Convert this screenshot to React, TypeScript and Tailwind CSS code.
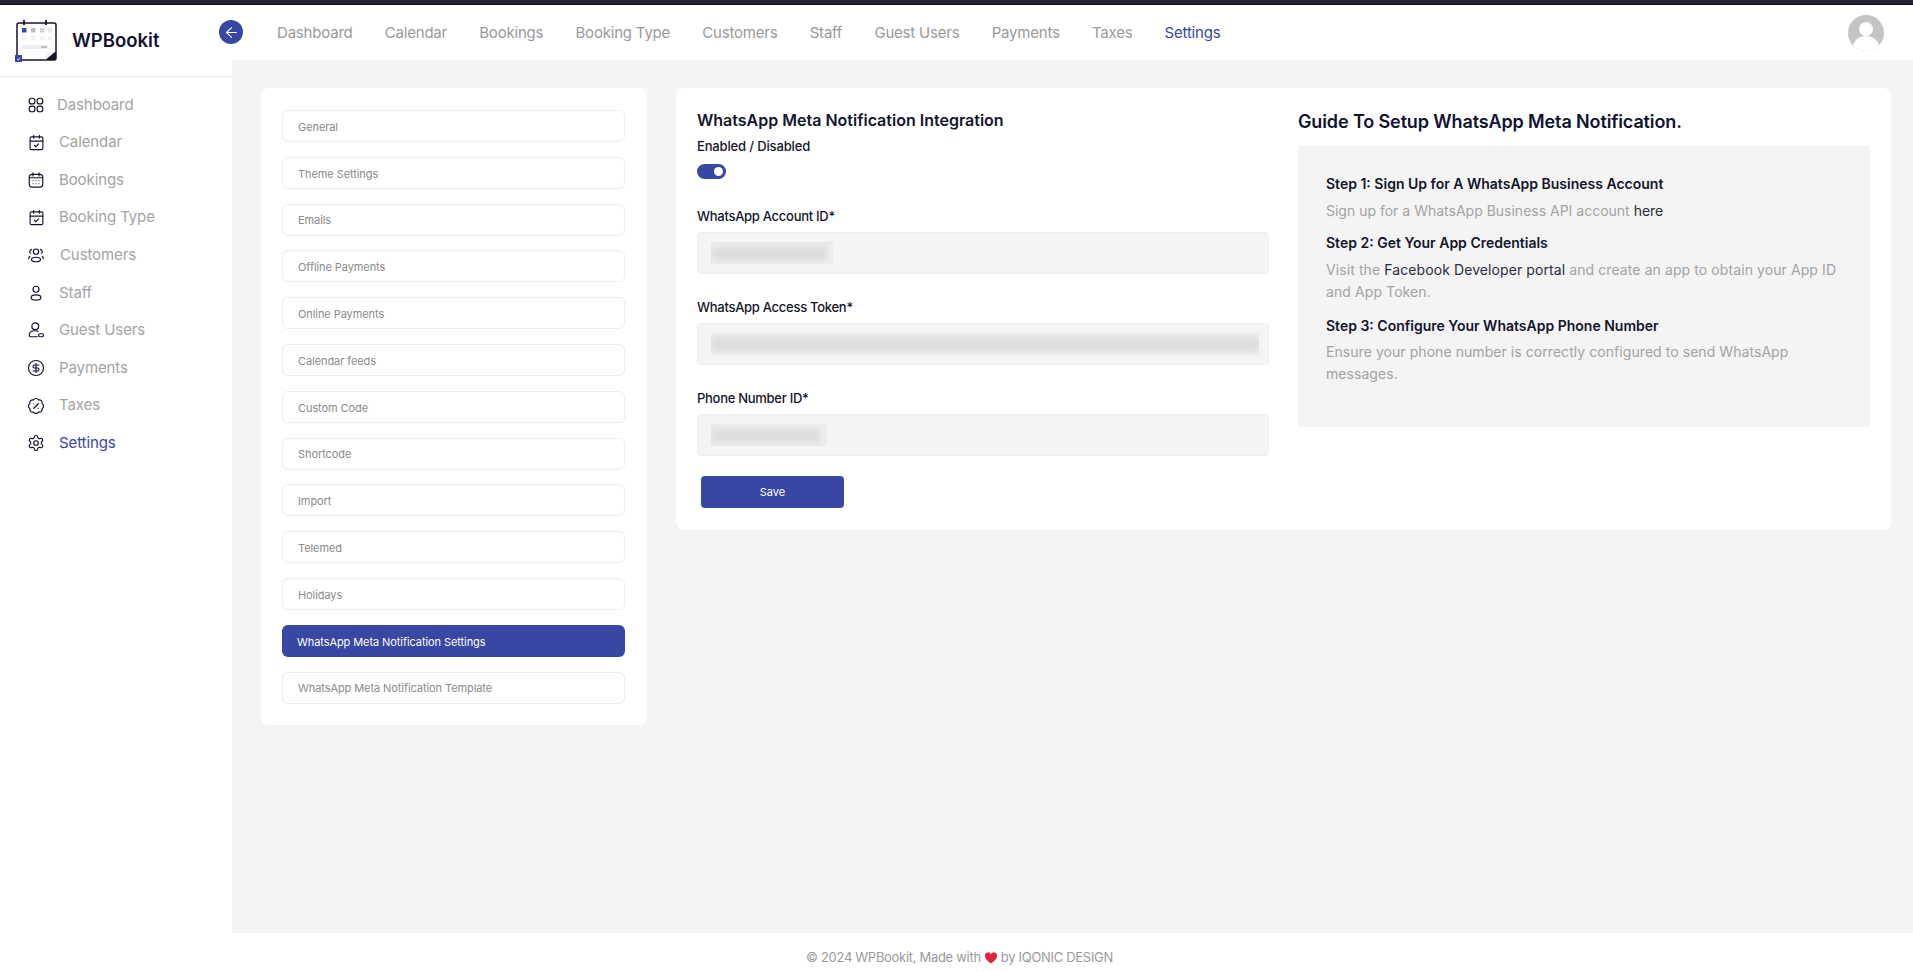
import { CalendarCheck, CircleDollarSign, BadgePercent, Settings, ArrowLeft } from "lucide-react";
import type { ReactNode } from "react";

const topLinks = ["Dashboard", "Calendar", "Bookings", "Booking Type", "Customers", "Staff", "Guest Users", "Payments", "Taxes", "Settings"];

const settingsTabs = [
  "General",
  "Theme Settings",
  "Emails",
  "Offline Payments",
  "Online Payments",
  "Calendar feeds",
  "Custom Code",
  "Shortcode",
  "Import",
  "Telemed",
  "Holidays",
  "WhatsApp Meta Notification Settings",
  "WhatsApp Meta Notification Template",
];

function Svg({ children }: { children: ReactNode }) {
  return (
    <svg viewBox="0 0 24 24" fill="none" stroke="#13152b" strokeWidth="1.6" strokeLinecap="round" strokeLinejoin="round" className="w-[18px] h-[18px]">
      {children}
    </svg>
  );
}

const calendarCheck = <CalendarCheck className="w-[17px] h-[17px] text-[#13152b]" strokeWidth={1.6} />;

const sideLinks: { label: string; icon: ReactNode; gap: string }[] = [
  {
    label: "Dashboard",
    gap: "ml-[12px]",
    icon: (
      <Svg>
        <rect x="3" y="3" width="7.5" height="7.5" rx="3" />
        <rect x="13.5" y="3" width="7.5" height="7.5" rx="3" />
        <rect x="3" y="13.5" width="7.5" height="7.5" rx="3" />
        <rect x="13.5" y="13.5" width="7.5" height="7.5" rx="3" />
      </Svg>
    ),
  },
  { label: "Calendar", gap: "ml-[14px]", icon: calendarCheck },
  {
    label: "Bookings",
    gap: "ml-[14px]",
    icon: (
      <Svg>
        <rect x="3" y="4.5" width="18" height="17" rx="4" />
        <path d="M8 2.5v4M16 2.5v4M3 9h18" />
        <path d="M8 13h.01M12 13h.01M16 13h.01M8 17h.01M12 17h.01M16 17h.01" />
      </Svg>
    ),
  },
  { label: "Booking Type", gap: "ml-[14px]", icon: calendarCheck },
  {
    label: "Customers",
    gap: "ml-[15px]",
    icon: (
      <Svg>
        <circle cx="12" cy="7.5" r="3.5" />
        <ellipse cx="12" cy="18" rx="6" ry="3" />
        <path d="M6 4.5a3 3 0 0 0-1.5 5M18 4.5a3 3 0 0 1 1.5 5M3.5 14a3.5 3.5 0 0 0-1 3M20.5 14a3.5 3.5 0 0 1 1 3" />
      </Svg>
    ),
  },
  {
    label: "Staff",
    gap: "ml-[14px]",
    icon: (
      <Svg>
        <circle cx="12" cy="7" r="4" />
        <ellipse cx="12" cy="18" rx="6.5" ry="3.5" />
      </Svg>
    ),
  },
  {
    label: "Guest Users",
    gap: "ml-[14px]",
    icon: (
      <Svg>
        <circle cx="11" cy="7" r="4.5" />
        <path d="M14 21H5.5A2.5 2.5 0 0 1 3 18.5C3 15 6.5 13 11 13c1.5 0 2.8.2 4 .7" />
        <rect x="15.5" y="17" width="6.5" height="4" rx="2" />
      </Svg>
    ),
  },
  { label: "Payments", gap: "ml-[14px]", icon: <CircleDollarSign className="w-[18px] h-[18px] text-[#13152b]" strokeWidth={1.6} /> },
  { label: "Taxes", gap: "ml-[14px]", icon: <BadgePercent className="w-[18px] h-[18px] text-[#13152b]" strokeWidth={1.6} /> },
  { label: "Settings", gap: "ml-[14px]", icon: <Settings className="w-[18px] h-[18px] text-[#13152b]" strokeWidth={1.6} /> },
];

function Logo() {
  return (
    <svg viewBox="0 0 44 44" className="w-[44px] h-[44px]">
      <rect x="3" y="4" width="39" height="37" rx="2" fill="#fff" stroke="#13152b" strokeWidth="1.5" />
      <path d="M10 1v5M32 1v5" stroke="#13152b" strokeWidth="1.8" />
      <rect x="8" y="9" width="4.5" height="4.5" fill="#3846a4" />
      <rect x="17" y="9" width="4.5" height="4.5" fill="#bdbdbd" />
      <rect x="26" y="9" width="4.5" height="4.5" fill="#d4d4d4" />
      <rect x="34" y="9" width="4.5" height="4.5" fill="#e8e8e8" />
      <rect x="8" y="17" width="4.5" height="4.5" fill="#f3f3f3" />
      <rect x="17" y="17" width="4.5" height="4.5" fill="#f3f3f3" />
      <rect x="26" y="17" width="4.5" height="4.5" fill="#f3f3f3" />
      <rect x="34" y="17" width="4.5" height="4.5" fill="#f3f3f3" />
      <rect x="8" y="26" width="26" height="4" fill="#eeeeee" />
      <rect x="27" y="27" width="6" height="2" fill="#bdbdbd" />
      <path d="M42 32v7a2 2 0 0 1-2 2h-9z" fill="#13152b" />
      <path d="M31 41l2-7 9-2z" fill="#eeeeee" />
      <rect x="1" y="36" width="7" height="7" fill="#3846a4" />
      <path d="M3 40l1.2 1L6 38.8" stroke="#fff" strokeWidth="0.8" fill="none" />
    </svg>
  );
}

// stands in for the values that are blurred out in the screen
function BlurredValue({ outer, inner }: { outer: string; inner: string }) {
  return (
    <div className={`${outer} bg-[#ededed] flex items-center overflow-hidden`}>
      <div className={`${inner} h-[13px] bg-[#dcdcdc] blur-[3px]`} />
    </div>
  );
}

function Field({ label, bar }: { label: string; bar: ReactNode }) {
  return (
    <div>
      <label className="block h-[17px] mb-[7px] text-[13px] tracking-[-0.28px] leading-[17px] font-medium text-[#13152b]">{label}</label>
      <div className="h-[42px] bg-[#f4f4f4] border border-[#eeeeee] rounded-[4px] flex items-center pl-[13px] pr-[9px]">{bar}</div>
    </div>
  );
}

export default function App() {
  return (
    <div className="h-screen overflow-hidden flex flex-col bg-[#f4f4f4] font-['Inter',sans-serif]">
      <div className="h-[5px] bg-[#24232f] border-b border-[#0d0d12] shrink-0" />

      <div className="flex-1 flex min-h-0">
        {/* Sidebar */}
        <aside className="w-[232px] shrink-0 bg-white relative">
          <div className="h-[72px] border-b border-[#eeeeee] flex items-center pl-[14px]">
            <Logo />
            <span className="ml-[14px] text-[18.5px] font-semibold text-[#0f1230]">WPBookit</span>
          </div>
          <nav className="pt-[9px] pl-[27px]">
            {sideLinks.map((l) => (
              <a key={l.label} className="h-[37.6px] flex items-center">
                <span className="w-[18px] flex justify-center">{l.icon}</span>
                <span className={`${l.gap} text-[15px] tracking-[-0.1px] ${l.label === "Settings" ? "text-[#3846a4]" : "text-[#a3a3a3]"}`}>{l.label}</span>
              </a>
            ))}
          </nav>
          <button className="absolute left-[219px] top-[15px] z-10 w-[24px] h-[24px] rounded-full bg-[#3846a4] flex items-center justify-center">
            <ArrowLeft className="w-[17px] h-[17px] text-white" strokeWidth={1.5} />
          </button>
        </aside>

        <div className="flex-1 flex flex-col min-w-0">
          {/* Top nav */}
          <header className="h-[55px] shrink-0 bg-white flex items-center justify-between pl-[45px] pr-[29px]">
            <nav className="flex items-center gap-[32.2px] pt-[2px]">
              {topLinks.map((t) => (
                <a key={t} className={`text-[15px] tracking-[-0.2px] ${t === "Settings" ? "text-[#3846a4]" : "text-[#9a9a9a]"}`}>
                  {t}
                </a>
              ))}
            </nav>
            <div className="w-[36px] h-[36px] rounded-full bg-[#c4c4c4] overflow-hidden flex flex-col items-center">
              <svg viewBox="0 0 36 36" className="w-[36px] h-[36px]">
                <circle cx="18" cy="14" r="7" fill="#fff" />
                <ellipse cx="18" cy="32" rx="13" ry="11" fill="#fff" />
              </svg>
            </div>
          </header>

          {/* Content */}
          <main className="flex-1 min-h-0 flex items-start pt-[28px] pl-[29px] pr-[22px] gap-[29px]">
            <section className="w-[386px] shrink-0 bg-white rounded-[8px] pl-[21px] pr-[22px] pt-[22px] pb-[21px] flex flex-col gap-[14.8px]">
              {settingsTabs.map((t) => (
                <a
                  key={t}
                  className={`h-[32px] rounded-[6px] flex items-center pl-[15px] pr-[15px] pt-[2px] text-[11px] tracking-[-0.08px] ${
                    t === "WhatsApp Meta Notification Settings" ? "bg-[#3846a4] text-white" : "bg-white border border-[#eeeeee] text-[#8a8a8a]"
                  }`}
                >
                  {t}
                </a>
              ))}
            </section>

            <section className="flex-1 bg-white rounded-[8px] pl-[21px] pr-[21px] pt-[22px] pb-[22px] flex gap-[29px]">
              <div className="w-[572px] shrink-0">
                <h2 className="text-[16px] leading-[20px] font-semibold text-[#13152b]">WhatsApp Meta Notification Integration</h2>
                <p className="mt-[8px] text-[13px] tracking-[-0.15px] leading-[17px] font-medium text-[#13152b]">Enabled / Disabled</p>
                <div className="mt-[9px] w-[29px] h-[15px] rounded-full bg-[#3846a4] flex items-center justify-end pr-[3px]">
                  <span className="w-[9px] h-[9px] rounded-full bg-white" />
                </div>
                <div className="mt-[29px] flex flex-col gap-[25px]">
                  <Field label="WhatsApp Account ID*" bar={<BlurredValue outer="w-[122px] h-[22px]" inner="w-[116px]" />} />
                  <Field label="WhatsApp Access Token*" bar={<BlurredValue outer="w-full h-[22px]" inner="w-full" />} />
                  <Field label="Phone Number ID*" bar={<BlurredValue outer="w-[116px] h-[22px]" inner="w-[108px]" />} />
                </div>
                <button className="ml-[4px] mt-[20px] w-[143px] h-[32px] rounded-[4px] bg-[#3846a4] text-white text-[11px]">Save</button>
              </div>

              <div className="flex-1 min-w-0">
                <h2 className="text-[18px] tracking-[-0.12px] leading-[24px] font-semibold text-[#0f1230]">Guide To Setup WhatsApp Meta Notification.</h2>
                <div className="mt-[12px] h-[281px] bg-[#f4f4f4] px-[28px] pt-[28px] text-[14px]">
                  <h3 className="leading-[20px] font-semibold text-[#13152b]">Step 1: Sign Up for A WhatsApp Business Account</h3>
                  <p className="mt-[6px] leading-[22px] text-[#a3a3a3]">
                    Sign up for a WhatsApp Business API account <a className="text-[#2c2c3a]">here</a>
                  </p>
                  <h3 className="mt-[11px] leading-[20px] font-semibold text-[#13152b]">Step 2: Get Your App Credentials</h3>
                  <p className="mt-[6px] leading-[22px] tracking-[0.09px] text-[#a3a3a3]">
                    Visit the <a className="text-[#2c2c3a]">Facebook Developer portal</a> and create an app to obtain your App ID and App Token.
                  </p>
                  <h3 className="mt-[13px] leading-[20px] font-semibold text-[#13152b]">Step 3: Configure Your WhatsApp Phone Number</h3>
                  <p className="mt-[5px] leading-[22px] tracking-[0.06px] text-[#a3a3a3]">
                    Ensure your phone number is correctly configured to send WhatsApp messages.
                  </p>
                </div>
              </div>
            </section>
          </main>

          <footer className="h-[38px] shrink-0 bg-white flex items-center justify-center text-[13px] tracking-[-0.3px] text-[#9a9a9a] pr-[226px] pt-[12px]">
            © 2024 WPBookit, Made with
            <svg viewBox="0 0 24 24" className="w-[14px] h-[14px] mx-[3px]" fill="#e0243f">
              <path d="M12 21.5C5 16 1.5 12.5 1.5 8A5.5 5.5 0 0 1 12 5.5 5.5 5.5 0 0 1 22.5 8c0 4.5-3.5 8-10.5 13.5z" />
            </svg>
            by IQONIC DESIGN
          </footer>
        </div>
      </div>
    </div>
  );
}
